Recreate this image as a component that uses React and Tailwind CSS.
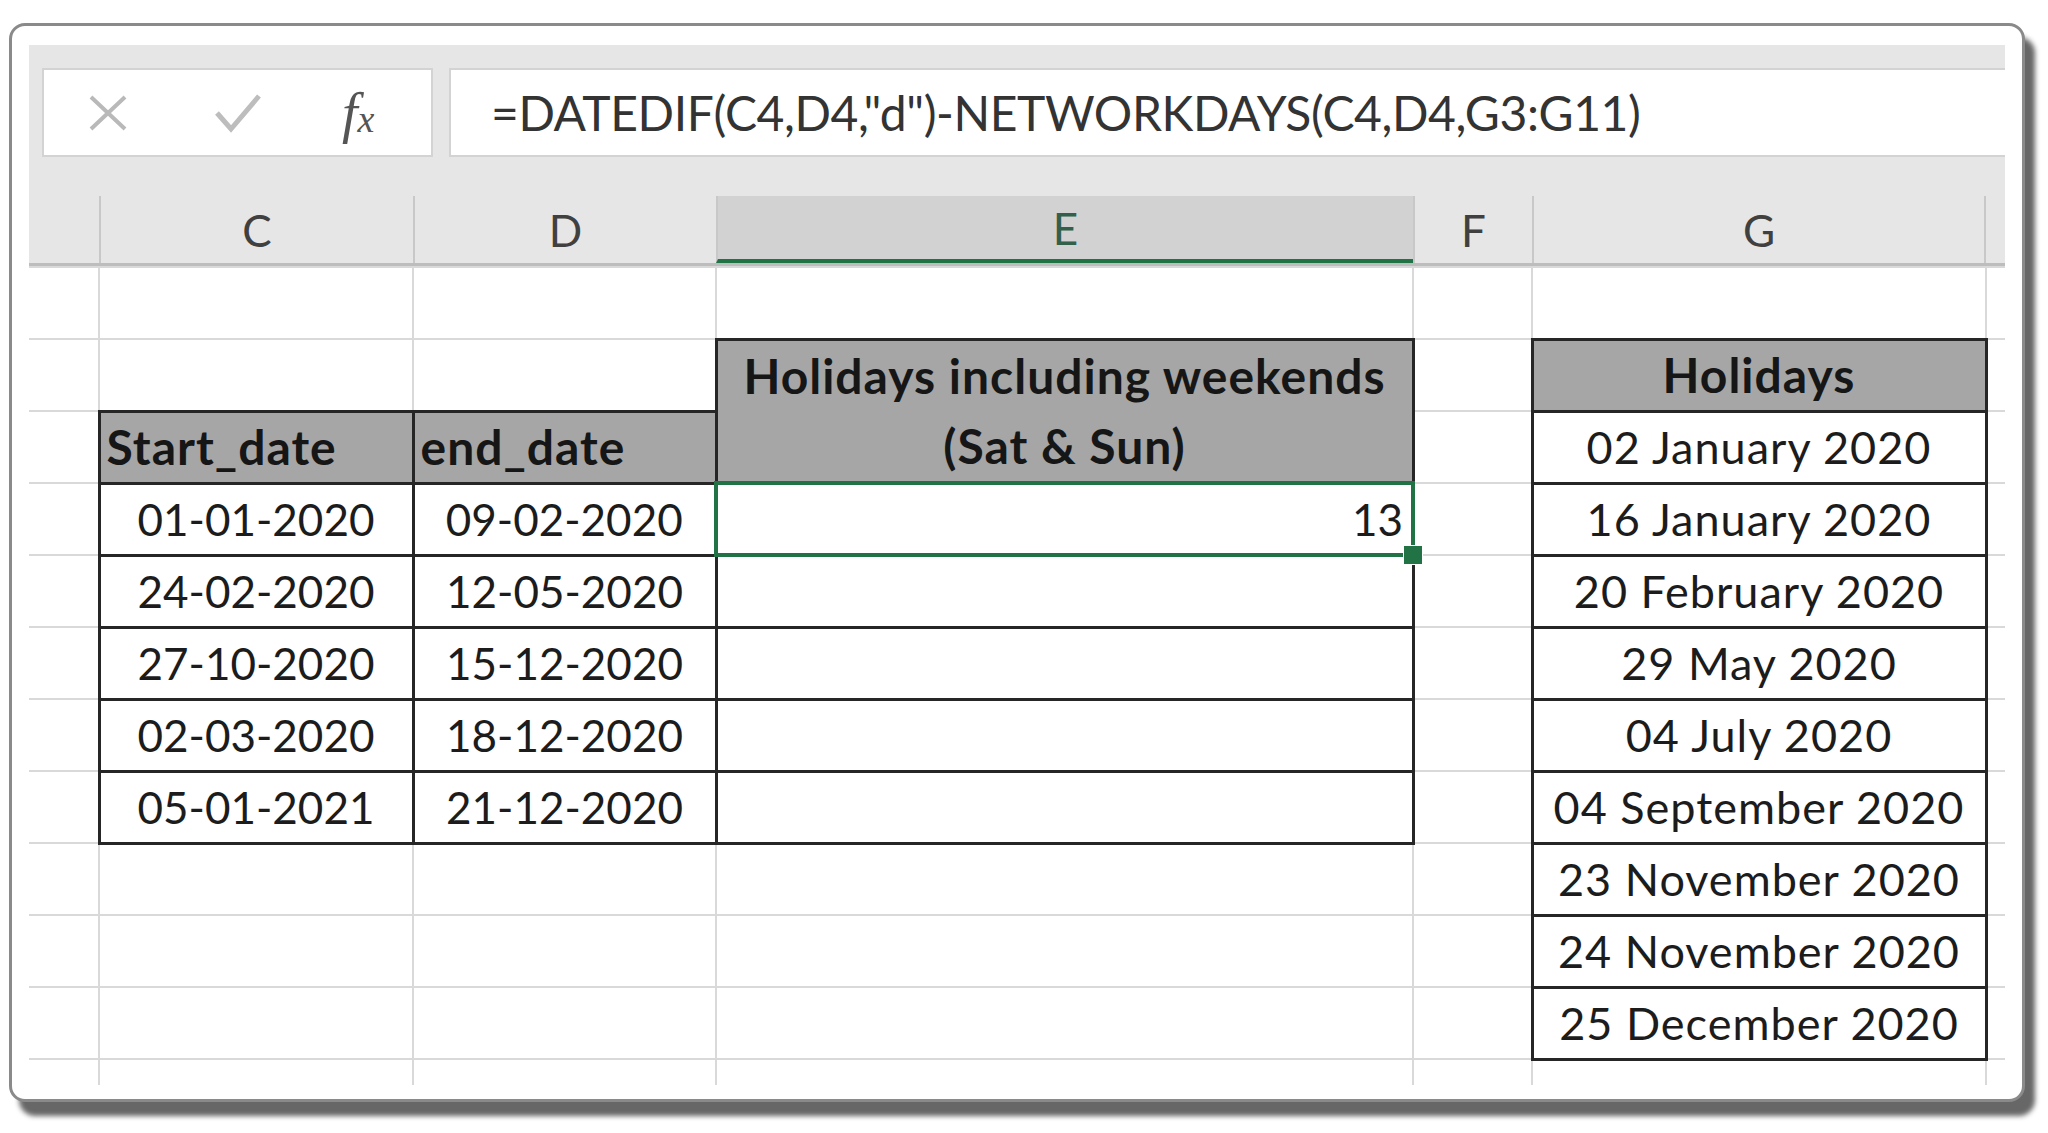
import clsx from 'clsx';

const COLS = [70, 314, 303, 697, 119, 454, 19];

const starts = ['01-01-2020', '24-02-2020', '27-10-2020', '02-03-2020', '05-01-2021'];
const ends = ['09-02-2020', '12-05-2020', '15-12-2020', '18-12-2020', '21-12-2020'];
const holidays = [
  '02 January 2020',
  '16 January 2020',
  '20 February 2020',
  '29 May 2020',
  '04 July 2020',
  '04 September 2020',
  '23 November 2020',
  '24 November 2020',
  '25 December 2020'
];

const light = 'border-2 border-[#d9d9d9]';
const dark = 'border-[3px] border-[#262626]';
const head = 'bg-[#a6a6a6] font-bold text-[48px] tracking-[1px] text-[#161616]';
const hol = 'text-center text-[45px] tracking-[1px]';

const CancelIcon = () => (
  <svg width="42" height="38" viewBox="0 0 42 38">
    <path d="M4 3 L38 35 M38 3 L4 35" stroke="#b9b9b9" strokeWidth="4" fill="none" />
  </svg>
);

const CheckIcon = () => (
  <svg width="48" height="40" viewBox="0 0 48 40">
    <path d="M3 20 L17 36 L45 3" stroke="#bdbdbd" strokeWidth="5" fill="none" />
  </svg>
);

const FormulaBar = () => (
  <div className="flex h-[89px] pl-[13px]">
    <div className="w-[391px] bg-white border-2 border-[#d3d3d3] flex items-center pl-[43px]">
      <CancelIcon />
      <span className="ml-[85px]">
        <CheckIcon />
      </span>
      <span className="ml-[80px] font-['Liberation_Serif',serif] italic text-[#555] leading-none">
        <span className="text-[56px]">f</span>
        <span className="text-[38px]">x</span>
      </span>
    </div>
    <div className="ml-[16px] flex-1 bg-white border-2 border-r-0 border-[#d3d3d3] flex items-center pl-[40px]">
      <span className="text-[48px] text-[#333] leading-none tracking-[-0.4px]">
        =DATEDIF(C4,D4,"d")-NETWORKDAYS(C4,D4,G3:G11)
      </span>
    </div>
  </div>
);

const ColumnHeaders = () => (
  <div className="flex h-[70px] mt-[39px] border-b-[3px] border-[#bdbdbd] text-[44px] text-[#404040] leading-none">
    <div className="w-[70px]" />
    <div className="w-[314px] border-l-2 border-[#c8c8c8] flex items-center justify-center">C</div>
    <div className="w-[303px] border-l-2 border-[#c8c8c8] flex items-center justify-center">D</div>
    <div className="w-[697px] border-l-2 border-[#c8c8c8] bg-[#d2d2d2] border-b-4 border-b-[#217346] flex items-center justify-center text-[#33604a]">
      E
    </div>
    <div className="w-[119px] border-l-2 border-[#c8c8c8] flex items-center justify-center">F</div>
    <div className="w-[454px] border-l-2 border-r-2 border-[#c8c8c8] flex items-center justify-center">G</div>
    <div className="flex-1" />
  </div>
);

const Edge = ({ last }) => (
  <td className={clsx(light, 'border-l-0', last && 'border-b-0')} />
);
const EdgeR = ({ last }) => (
  <td className={clsx(light, 'border-r-0', last && 'border-b-0')} />
);

const Sheet = () => {
  const rows = [];

  rows.push(
    <tr key="r1" className="h-[72px]">
      <Edge />
      <td className={light} />
      <td className={light} />
      <td className={light} />
      <td className={light} />
      <td className={light} />
      <EdgeR />
    </tr>
  );

  rows.push(
    <tr key="r2" className="h-[72px]">
      <Edge />
      <td className={light} />
      <td className={light} />
      <td rowSpan={2} className={clsx(dark, head, 'text-center leading-[70px]')}>
        Holidays including weekends
        <br />
        (Sat &amp; Sun)
      </td>
      <td className={light} />
      <td className={clsx(dark, head, 'text-center')}>Holidays</td>
      <EdgeR />
    </tr>
  );

  rows.push(
    <tr key="r3" className="h-[72px]">
      <Edge />
      <td className={clsx(dark, head, 'text-left pl-[6px]')}>Start_date</td>
      <td className={clsx(dark, head, 'text-left pl-[6px]')}>end_date</td>
      <td className={light} />
      <td className={clsx(dark, hol)}>{holidays[0]}</td>
      <EdgeR />
    </tr>
  );

  for (let i = 0; i < 5; i++) {
    rows.push(
      <tr key={'d' + i} className="h-[72px]">
        <Edge />
        <td className={clsx(dark, 'text-center')}>{starts[i]}</td>
        <td className={clsx(dark, 'text-center')}>{ends[i]}</td>
        {i === 0 ? (
          <td className="relative border-4 border-[#217346] text-right pr-[8px]">
            13
            <span className="absolute -right-[12px] -bottom-[12px] w-[20px] h-[20px] bg-[#217346] border border-white" />
          </td>
        ) : (
          <td className={dark} />
        )}
        <td className={light} />
        <td className={clsx(dark, hol)}>{holidays[i + 1]}</td>
        <EdgeR />
      </tr>
    );
  }

  for (let i = 6; i < 9; i++) {
    rows.push(
      <tr key={'h' + i} className="h-[72px]">
        <Edge />
        <td className={light} />
        <td className={light} />
        <td className={light} />
        <td className={light} />
        <td className={clsx(dark, hol)}>{holidays[i]}</td>
        <EdgeR />
      </tr>
    );
  }

  rows.push(
    <tr key="tail" className="h-[26px]">
      <Edge last />
      <td className={clsx(light, 'border-b-0')} />
      <td className={clsx(light, 'border-b-0')} />
      <td className={clsx(light, 'border-b-0')} />
      <td className={clsx(light, 'border-b-0')} />
      <td className={clsx(light, 'border-b-0')} />
      <EdgeR last />
    </tr>
  );

  return (
    <table className="border-collapse table-fixed w-[1976px] text-[44px] text-[#1c1c1c] leading-none">
      <colgroup>
        {COLS.map((w, i) => (
          <col key={i} style={{ width: w }} />
        ))}
      </colgroup>
      <tbody>{rows}</tbody>
    </table>
  );
};

export default function App() {
  return (
    <div className="w-[2048px] h-[1133px] bg-white pt-[23px] pl-[9px] overflow-hidden font-[Lato,sans-serif]">
      <div className="w-[2016px] h-[1079px] bg-white border-[3px] border-[#8a8a8a] rounded-[16px] shadow-[10px_14px_5px_rgba(95,95,95,0.95)] pt-[19px] pl-[17px] overflow-hidden">
        <div className="w-[1976px] bg-[#e6e6e6] pt-[23px]">
          <FormulaBar />
          <ColumnHeaders />
        </div>
        <Sheet />
      </div>
    </div>
  );
}
